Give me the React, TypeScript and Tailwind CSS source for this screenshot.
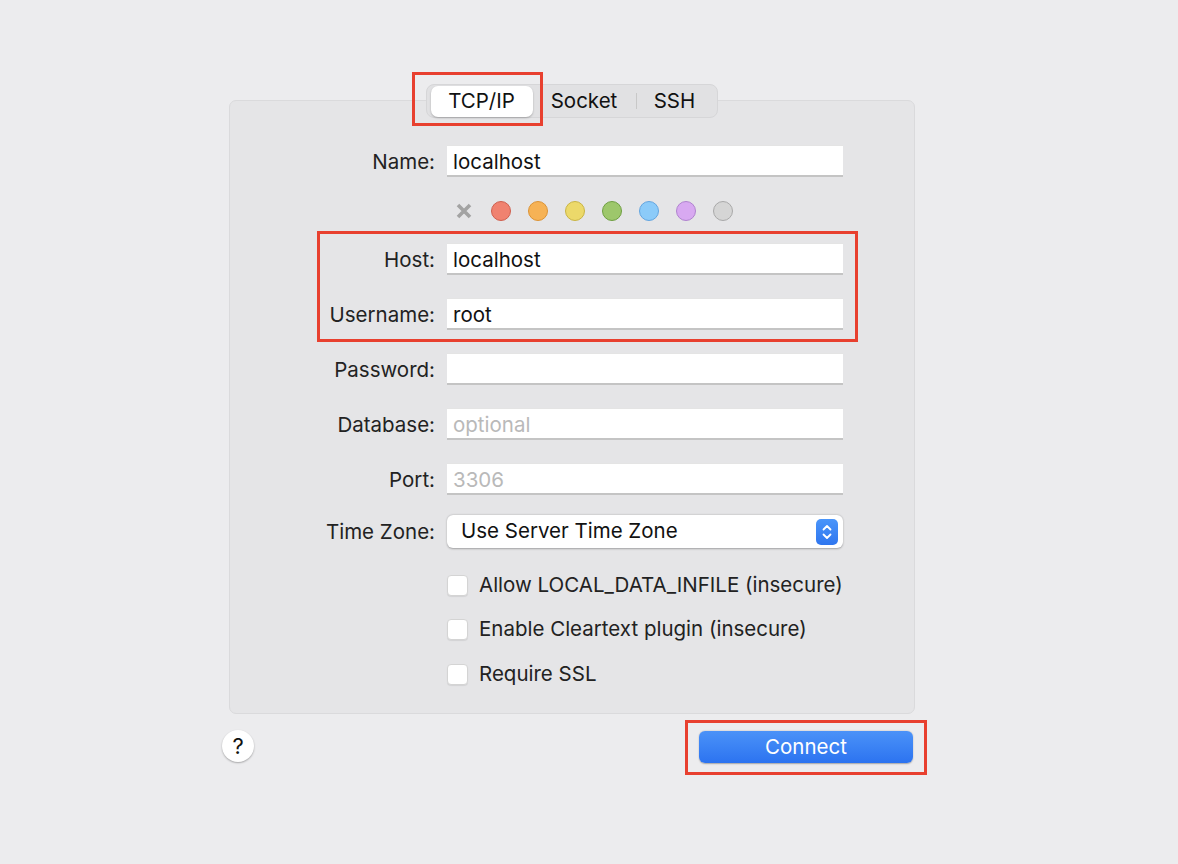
import React from "react";

const font = { fontFamily: "Inter, 'Noto Sans', sans-serif" };

function Field({ label, value, placeholder }: { label: string; value?: string; placeholder?: string }) {
  return (
    <div className="flex items-center h-[32px]">
      <div className="w-[217px] shrink-0 pr-[12px] text-right text-[20.5px] text-[#222] pt-[2px]">{label}</div>
      <div className="h-[32px] w-[396px] bg-white border-t border-t-[#e4e4e4] border-b-2 border-b-[#c4c4c4] flex items-center px-[6px] text-[20.5px] pt-[3px]">
        {value ? <span className="text-[#111]">{value}</span> : <span className="text-[#b9b9b9]">{placeholder}</span>}
      </div>
    </div>
  );
}

function Check({ label, className }: { label: string; className?: string }) {
  return (
    <div className={"flex items-center h-[21px] pl-[217px] " + (className || "")}>
      <div className="h-[21px] w-[21px] shrink-0 rounded-[4px] bg-white border border-[#d4d4d4] shadow-[0_1px_1px_rgba(0,0,0,0.08)]" />
      <span className="ml-[11px] text-[20.5px] text-[#222] whitespace-nowrap">{label}</span>
    </div>
  );
}

const colors = [
  ["#f08270", "#cf5f4e"],
  ["#f6b255", "#dc9335"],
  ["#ecd96a", "#c9b443"],
  ["#9dc76b", "#6f9f42"],
  ["#8ccbf9", "#63a5e0"],
  ["#d8a9f1", "#b083cf"],
  ["#d5d5d5", "#a9a9a9"],
];

export default function App() {
  return (
    <div className="w-[1178px] h-[864px] bg-[#ececee] flex flex-col items-start pt-[84px] pl-[229px]" style={font}>
      <div className="w-[686px] flex flex-col">
        {/* Tabs */}
        <div className="relative z-10 flex justify-center">
          <div className="flex items-center h-[34px] rounded-[8px] bg-[#e1e1e3] border border-[#d6d6d8] px-[4px] ml-[-1px]">
            <div className="relative h-[31px] w-[102px] rounded-[7px] bg-white shadow-[0_1px_2px_rgba(0,0,0,0.25)] flex items-center justify-center text-[20.5px] text-[#111]">
              TCP/IP
              <div className="absolute left-[-19px] right-[-10px] top-[-14px] bottom-[-9px] border-[3px] border-[#e8402f] pointer-events-none" />
            </div>
            <div className="w-[103px] text-center text-[20.5px] text-[#111]">Socket</div>
            <div className="h-[16px] w-px bg-[#c8c8c8]" />
            <div className="w-[76px] text-center text-[20.5px] text-[#111]">SSH</div>
          </div>
        </div>

        {/* Panel */}
        <div className="mt-[-18px] rounded-[7px] bg-[#e5e5e7] border border-[#dadadc] pt-[44px] pb-[28px]">
          <Field label="Name:" value="localhost" />

          <div className="mt-[24px] flex items-center pl-[224px] gap-[17px] h-[20px]">
            <div className="w-[20px] h-[20px] flex items-center justify-center">
              <svg width="16" height="16" viewBox="0 0 16 16">
                <path d="M2 2 L14 14 M14 2 L2 14" stroke="#a3a3a3" strokeWidth="3.6" strokeLinecap="butt" />
              </svg>
            </div>
            {colors.map(([bg, bd]) => (
              <div key={bg} className="w-[20px] h-[20px] rounded-full border" style={{ backgroundColor: bg, borderColor: bd }} />
            ))}
          </div>

          <div className="relative mt-[22px]">
            <Field label="Host:" value="localhost" />
            <div className="mt-[23px]">
              <Field label="Username:" value="root" />
            </div>
            <div className="absolute left-[87px] right-[56px] top-[-12px] bottom-[-12px] border-[3px] border-[#e8402f] pointer-events-none" />
          </div>

          <div className="mt-[23px]">
            <Field label="Password:" value="" placeholder="" />
          </div>
          <div className="mt-[23px]">
            <Field label="Database:" placeholder="optional" />
          </div>
          <div className="mt-[23px]">
            <Field label="Port:" placeholder="3306" />
          </div>

          <div className="mt-[20px] flex items-center">
            <div className="w-[217px] shrink-0 pr-[12px] text-right text-[20.5px] text-[#222] pt-[2px]">Time Zone:</div>
            <div className="h-[33px] w-[396px] rounded-[6px] bg-white shadow-[0_0.5px_2px_rgba(0,0,0,0.3)] flex items-center justify-between pl-[14px] pr-[5px]">
              <span className="text-[20.5px] text-[#111]">Use Server Time Zone</span>
              <div className="h-[26px] w-[22px] rounded-[5px] bg-gradient-to-b from-[#4a95fa] to-[#2f76ef] flex items-center justify-center">
                <svg width="12" height="18" viewBox="0 0 12 18" fill="none">
                  <path d="M2.5 6.5 L6 3 L9.5 6.5" stroke="white" strokeWidth="1.8" strokeLinecap="round" strokeLinejoin="round" />
                  <path d="M2.5 11.5 L6 15 L9.5 11.5" stroke="white" strokeWidth="1.8" strokeLinecap="round" strokeLinejoin="round" />
                </svg>
              </div>
            </div>
          </div>

          <Check label="Allow LOCAL_DATA_INFILE (insecure)" className="mt-[27px]" />
          <Check label="Enable Cleartext plugin (insecure)" className="mt-[23px]" />
          <Check label="Require SSL" className="mt-[24px]" />
        </div>

        {/* Bottom row */}
        <div className="mt-[16px] flex items-start justify-between ml-[-7px] mr-[2px]">
          <div className="h-[32px] w-[32px] rounded-full bg-white shadow-[0_1px_2px_rgba(0,0,0,0.3)] flex items-center justify-center text-[22px] text-[#111]">
            ?
          </div>
          <div className="relative mt-[1px]">
            <div className="h-[32px] w-[214px] rounded-[6px] bg-gradient-to-b from-[#4b92f8] to-[#2c73f0] shadow-[0_0.5px_1.5px_rgba(0,0,0,0.3)] flex items-center justify-center text-[20.5px] text-white">
              Connect
            </div>
            <div className="absolute left-[-14px] right-[-14px] top-[-11px] bottom-[-12px] border-[3px] border-[#e8402f] pointer-events-none" />
          </div>
        </div>
      </div>
    </div>
  );
}
